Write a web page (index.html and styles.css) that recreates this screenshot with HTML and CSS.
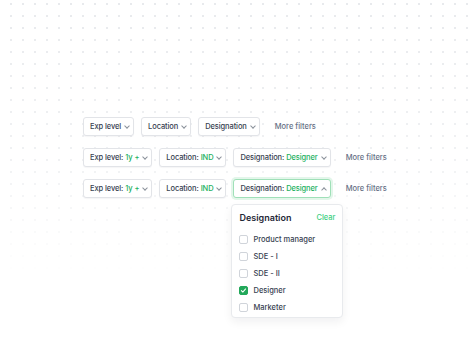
FILE: index.html
```html
<!DOCTYPE html>
<html lang="en">
<head>
  <meta charset="UTF-8" />
  <meta name="viewport" content="width=device-width, initial-scale=1" />
  <title>Filters</title>
  <link rel="stylesheet" href="styles.css">
</head>
<body>
  <div class="canvas">
    <div class="rows">

      <div class="filter-row">
        <button class="chip">Exp level <span class="chev"></span></button>
        <button class="chip">Location <span class="chev"></span></button>
        <button class="chip">Designation <span class="chev"></span></button>
        <span class="more">More filters</span>
      </div>

      <div class="filter-row">
        <button class="chip">Exp level: <b>1y +</b> <span class="chev"></span></button>
        <button class="chip">Location: <b>IND</b> <span class="chev"></span></button>
        <button class="chip">Designation: <b>Designer</b> <span class="chev"></span></button>
        <span class="more">More filters</span>
      </div>

      <div class="filter-row">
        <button class="chip">Exp level: <b>1y +</b> <span class="chev"></span></button>
        <button class="chip">Location: <b>IND</b> <span class="chev"></span></button>
        <div class="chip-wrap">
          <button class="chip open">Designation: <b>Designer</b> <span class="chev up"></span></button>
          <div class="dropdown">
            <div class="dd-head">
              <span class="dd-title">Designation</span>
              <span class="clear">Clear</span>
            </div>
            <ul class="options">
              <li><span class="box"></span>Product manager</li>
              <li><span class="box"></span>SDE - I</li>
              <li><span class="box"></span>SDE - II</li>
              <li><span class="box checked"><svg viewBox="0 0 10 10" width="7" height="7"><path d="M2 5.2l2 2 4-4.4" fill="none" stroke="#fff" stroke-width="1.5" stroke-linecap="round" stroke-linejoin="round"/></svg></span>Designer</li>
              <li><span class="box"></span>Marketer</li>
            </ul>
          </div>
        </div>
        <span class="more">More filters</span>
      </div>

    </div>
  </div>
</body>
</html>
```

FILE: styles.css
```css
* {
  box-sizing: border-box;
}
body {
  margin: 0;
  font-family: Inter, 'Noto Sans', sans-serif;
  color: #374151;
  background: #fff;
}
.canvas {
  width: 474px;
  height: 355px;
  background-image: radial-gradient(circle, #e8eaed 0.8px, transparent 1.2px);
  background-size: 12px 12px;
  background-position: 5px -2px;
  padding: 117px 0 0 83px;
  position: relative;
}
.canvas::after {
  content: "";
  position: absolute;
  inset: 0;
  background: linear-gradient(to bottom, rgba(255,255,255,0) 0%, rgba(255,255,255,0.35) 45%, #fff 78%);
  pointer-events: none;
}
.rows {
  position: relative;
  z-index: 1;
  display: flex;
  flex-direction: column;
  gap: 12px;
}
.filter-row {
  display: flex;
  align-items: center;
  gap: 7px;
}
.chip {
  display: flex;
  align-items: center;
  gap: 4px;
  height: 19px;
  padding: 0 4px 0 6px;
  font-family: inherit;
  font-size: 7.5px;
  font-weight: 500;
  letter-spacing: -0.1px;
  color: #374151;
  background: #fff;
  border: 1px solid #e2e4e8;
  border-radius: 3px;
  box-shadow: 0 1px 1px rgba(16, 24, 40, 0.04);
  white-space: nowrap;
}
.chip b {
  font-weight: 500;
  color: #22b060;
  margin-left: -2px;
}
.chip.open {
  border-color: #9fe0b8;
  box-shadow: 0 0 0 2px #e3f6ea;
}
.chev {
  width: 4px;
  height: 4px;
  border-right: 1px solid #8a9099;
  border-bottom: 1px solid #8a9099;
  transform: translateY(-1px) rotate(45deg);
}
.chev.up {
  transform: translateY(1px) rotate(-135deg);
}
.more {
  font-size: 7.5px;
  font-weight: 500;
  color: #667085;
  margin-left: 8px;
}
.chip-wrap {
  position: relative;
}
.dropdown {
  position: absolute;
  top: 25px;
  left: -2px;
  width: 112px;
  background: #fff;
  border: 1px solid #e8eaed;
  border-radius: 4px;
  box-shadow: 0 4px 10px rgba(16, 24, 40, 0.06);
  padding: 7px 7px 5px 7px;
}
.dd-head {
  display: flex;
  justify-content: space-between;
  align-items: center;
  margin-bottom: 11px;
}
.dd-title {
  font-size: 9px;
  font-weight: 600;
  color: #1f2937;
}
.clear {
  font-size: 7.5px;
  font-weight: 500;
  color: #3ccf7f;
}
.options {
  list-style: none;
  margin: 0;
  padding: 0;
  display: flex;
  flex-direction: column;
  gap: 7px;
}
.options li {
  display: flex;
  align-items: center;
  gap: 5px;
  height: 10px;
  font-size: 7.5px;
  font-weight: 500;
  color: #374151;
}
.box {
  width: 9px;
  height: 9px;
  border: 1px solid #d0d4da;
  border-radius: 2px;
  display: flex;
  align-items: center;
  justify-content: center;
}
.box.checked {
  background: #22a85a;
  border-color: #22a85a;
}
```
